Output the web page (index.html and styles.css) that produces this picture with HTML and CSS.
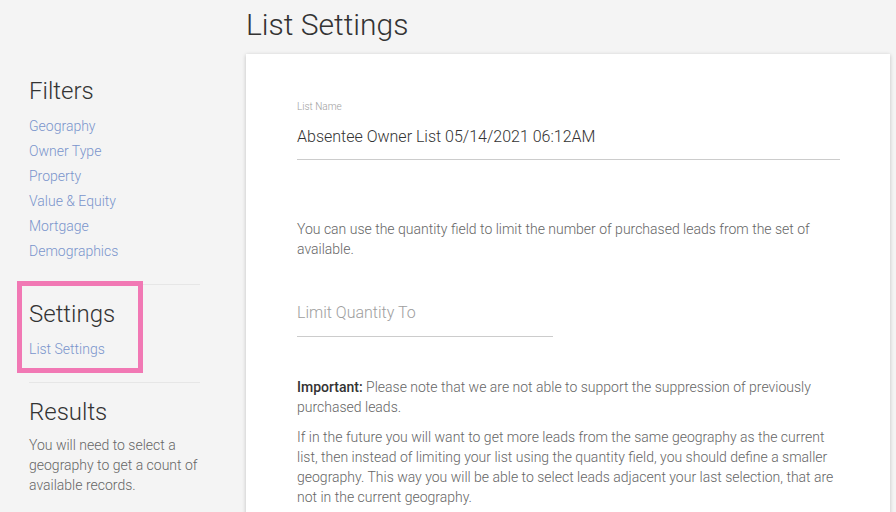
FILE: index.html
```html
<!DOCTYPE html>
<html>
<head>
<meta charset="utf-8">
<link rel="stylesheet" href="styles.css">
</head>
<body>
<div class="layout">
  <aside class="sidebar">
    <section class="side-section">
      <h2 class="side-title">Filters</h2>
      <ul class="side-links">
        <li><a href="#">Geography</a></li>
        <li><a href="#">Owner Type</a></li>
        <li><a href="#">Property</a></li>
        <li><a href="#">Value &amp; Equity</a></li>
        <li><a href="#">Mortgage</a></li>
        <li><a href="#">Demographics</a></li>
      </ul>
    </section>
    <section class="side-section settings">
      <h2 class="side-title">Settings</h2>
      <ul class="side-links">
        <li><a href="#">List Settings</a></li>
      </ul>
      <div class="highlight"></div>
    </section>
    <section class="side-section">
      <h2 class="side-title">Results</h2>
      <p class="side-text">You will need to select a geography to get a count of available records.</p>
    </section>
  </aside>
  <main class="main">
    <h1 class="page-title">List Settings</h1>
    <div class="card">
      <div class="field name-field">
        <label class="field-label">List Name</label>
        <div class="field-input">Absentee Owner List 05/14/2021 06:12AM</div>
      </div>
      <p class="text intro">You can use the quantity field to limit the number of purchased leads from the set of available.</p>
      <div class="field qty-field">
        <div class="field-input placeholder">Limit Quantity To</div>
      </div>
      <p class="text important"><strong>Important:</strong> Please note that we are not able to support the suppression of previously purchased leads.</p>
      <p class="text">If in the future you will want to get more leads from the same geography as the current list, then instead of limiting your list using the quantity field, you should define a smaller geography. This way you will be able to select leads adjacent your last selection, that are not in the current geography.</p>
    </div>
  </main>
</div>
</body>
</html>
```
FILE: styles.css
```css
* { box-sizing: border-box; }
html, body { margin: 0; padding: 0; }
body {
  background: #f4f4f4;
  font-family: Roboto, "Liberation Sans", sans-serif;
  font-weight: 300;
  color: #333;
  height: 512px;
  overflow: hidden;
}
.layout {
  display: flex;
  align-items: flex-start;
}
.sidebar {
  width: 200px;
  padding-left: 29px;
  padding-top: 76px;
  margin-right: 46px;
  flex-shrink: 0;
}
.side-section {
  position: relative;
  padding-bottom: 20px;
  border-bottom: 1px solid #e6e6e6;
  margin-bottom: 14px;
}
.side-section:last-child { border-bottom: none; }
.side-title {
  margin: 0 0 8px;
  font-size: 24px;
  line-height: 30px;
  font-weight: 300;
  color: #333;
}
.side-links {
  list-style: none;
  margin: 0;
  padding: 0;
}
.side-links li {
  font-size: 14px;
  line-height: 25px;
}
.side-links a {
  color: #7a94cc;
  text-decoration: none;
}
.side-text {
  margin: 5px 0 0;
  font-size: 14px;
  line-height: 20px;
  color: #666;
}
.highlight {
  position: absolute;
  left: -12px;
  top: -18px;
  width: 126px;
  height: 92px;
  border: 5px solid #f178b4;
}
.main {
  flex: 1;
  padding-right: 6px;
}
.page-title {
  margin: 7px 0 11px;
  font-size: 30px;
  line-height: 36px;
  font-weight: 300;
  color: #333;
}
.card {
  background: #fff;
  box-shadow: 0 1px 4px rgba(0, 0, 0, 0.22);
  padding: 47px 50px 40px 51px;
  min-height: 500px;
}
.field-label {
  display: block;
  font-size: 10px;
  line-height: 12px;
  color: #9e9e9e;
  margin-bottom: 12px;
}
.field-input {
  font-size: 16px;
  line-height: 24px;
  color: #333;
  padding-bottom: 10px;
  border-bottom: 1px solid #ccc;
}
.placeholder {
  color: #9e9e9e;
  padding-bottom: 11px;
}
.qty-field { width: 256px; }
.text {
  margin: 0 0 10px;
  font-size: 14px;
  line-height: 20px;
  color: #666;
}
.text strong {
  font-weight: 500;
  color: #333;
}
.intro { margin: 59px 0 42px; }
.important { margin-top: 40px; }
```
